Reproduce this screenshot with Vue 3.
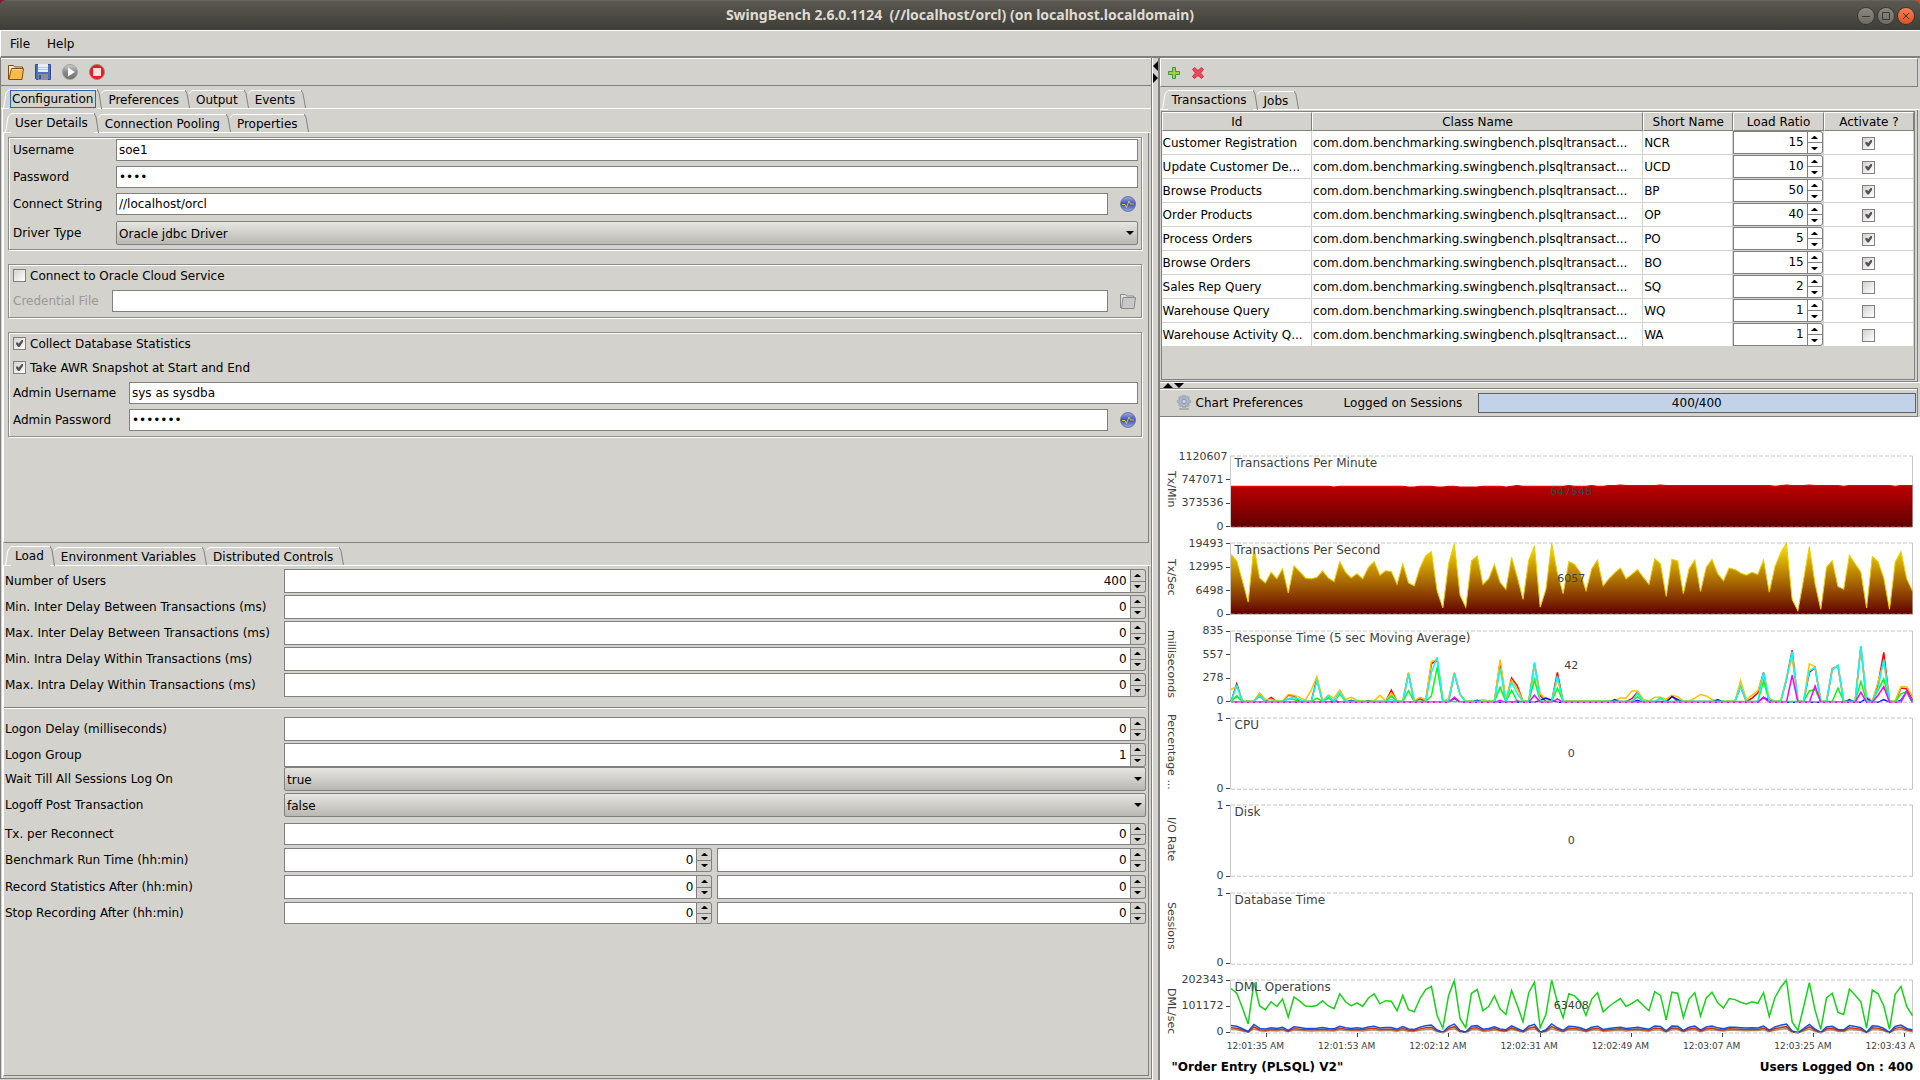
<script setup>
import { reactive, ref } from "vue";

const mainTabs = ["Configuration", "Preferences", "Output", "Events"];
const detailTabs = ["User Details", "Connection Pooling", "Properties"];
const loadTabs = ["Load", "Environment Variables", "Distributed Controls"];
const sideTabs = ["Transactions", "Jobs"];

const active = reactive({
  main: "Configuration",
  detail: "User Details",
  load: "Load",
  side: "Transactions",
});

const config = reactive({
  username: "soe1",
  password: "pass",
  connect: "//localhost/orcl",
  driver: "Oracle jdbc Driver",
  cloud: false,
  credential: "",
  collect: true,
  awr: true,
  adminUser: "sys as sysdba",
  adminPassword: "manager",
});

// each section is a block of rows in the Load tab
const sections = reactive([
  {
    name: "delays",
    rows: [
      { id: "users", label: "Number of Users", values: [400] },
      { id: "min-inter", label: "Min. Inter Delay Between Transactions (ms)", values: [0] },
      { id: "max-inter", label: "Max. Inter Delay Between Transactions (ms)", values: [0] },
      { id: "min-intra", label: "Min. Intra Delay Within Transactions (ms)", values: [0] },
      { id: "max-intra", label: "Max. Intra Delay Within Transactions (ms)", values: [0] },
    ],
  },
  {
    name: "logon",
    rows: [
      { id: "logon-delay", label: "Logon Delay (milliseconds)", values: [0] },
      { id: "logon-group", label: "Logon Group", values: [1] },
    ],
  },
  {
    name: "flags",
    rows: [
      { id: "wait", label: "Wait Till All Sessions Log On", choice: "true" },
      { id: "logoff", label: "Logoff Post Transaction", choice: "false" },
    ],
  },
  {
    name: "timing",
    rows: [
      { id: "reconnect", label: "Tx. per Reconnect", values: [0], short: true },
      { id: "runtime", label: "Benchmark Run Time (hh:min)", values: [0, 0] },
      { id: "record", label: "Record Statistics After (hh:min)", values: [0, 0] },
      { id: "stop", label: "Stop Recording After (hh:min)", values: [0, 0], short: true },
    ],
  },
]);

const className = "com.dom.benchmarking.swingbench.plsqltransact...";
const transactions = reactive([
  { id: "Customer Registration", short: "NCR", ratio: 15, on: true },
  { id: "Update Customer De...", short: "UCD", ratio: 10, on: true },
  { id: "Browse Products", short: "BP", ratio: 50, on: true },
  { id: "Order Products", short: "OP", ratio: 40, on: true },
  { id: "Process Orders", short: "PO", ratio: 5, on: true },
  { id: "Browse Orders", short: "BO", ratio: 15, on: true },
  { id: "Sales Rep Query", short: "SQ", ratio: 2, on: false },
  { id: "Warehouse Query", short: "WQ", ratio: 1, on: false },
  { id: "Warehouse Activity Q...", short: "WA", ratio: 1, on: false },
]);

const sessions = ref("400/400");

// samples are percentages of the chart maximum, one per tick of the clock
const SAMPLES = 120;

const tps = [
  84, 75, 47, 17, 95, 51, 44, 59, 50, 64, 30, 68, 60, 51, 50, 52, 61, 51, 46, 74,
  59, 51, 57, 50, 66, 74, 55, 61, 60, 42, 71, 44, 40, 65, 82, 88, 33, 9, 71, 99,
  27, 10, 75, 82, 42, 50, 70, 45, 35, 80, 52, 21, 76, 96, 10, 35, 100, 58, 29, 74,
  70, 59, 33, 64, 76, 40, 50, 58, 65, 50, 56, 63, 52, 42, 78, 71, 25, 77, 75, 29,
  64, 76, 32, 66, 77, 57, 47, 65, 63, 58, 55, 59, 56, 76, 31, 67, 86, 100, 21, 5,
  49, 95, 43, 7, 66, 75, 39, 35, 83, 71, 59, 9, 81, 74, 51, 7, 73, 88, 50, 33,
];

const tpmBumps = {
  18: -1, 31: -1, 32: -1, 36: -1, 37: -1, 40: -1, 41: -1, 42: -1, 43: -1, 48: -1, 50: 1,
  59: 1, 63: 1, 68: 1, 75: 1, 95: -1, 97: 1, 101: 1, 103: 0, 107: -1, 116: -1,
};
const tpm = Array.from({ length: SAMPLES }, (_, i) => (i < 66 ? 57.5 : 58.5) + (tpmBumps[i] || 0));

const spikes = (peaks, base) =>
  Array.from({ length: SAMPLES }, (_, i) => (i in peaks ? peaks[i] : base));

const responseSeries = [
  {
    color: "#ff0000",
    data: spikes({ 1: 26, 5: 12, 7: 7, 10: 10, 11: 9, 15: 33, 17: 9, 19: 14, 28: 17, 31: 41, 33: 5, 35: 54, 36: 60, 39: 41, 40: 11, 47: 56, 49: 34, 50: 23, 53: 54, 54: 9, 57: 42, 70: 5, 71: 14, 77: 9, 89: 22, 91: 6, 92: 13, 93: 42, 97: 32, 98: 73, 101: 42, 102: 49, 105: 47, 106: 51, 110: 78, 113: 25, 114: 70, 117: 20, 118: 19, 119: 3 }, 1),
  },
  {
    color: "#ffc000",
    data: spikes({ 0: 18, 1: 22, 5: 13, 6: 4, 7: 4, 10: 11, 11: 10, 12: 7, 13: 3, 14: 17, 15: 36, 16: 3, 17: 10, 18: 6, 19: 17, 20: 4, 21: 7, 22: 3, 26: 10, 28: 13, 31: 42, 33: 7, 34: 4, 35: 57, 36: 60, 38: 5, 39: 42, 40: 11, 44: 4, 47: 60, 48: 6, 49: 31, 50: 19, 53: 53, 54: 12, 55: 5, 57: 33, 68: 6, 69: 6, 70: 16, 71: 16, 72: 4, 74: 7, 75: 7, 76: 4, 77: 10, 78: 8, 81: 6, 82: 11, 83: 9, 84: 4, 89: 30, 90: 4, 91: 10, 92: 16, 93: 39, 94: 6, 97: 34, 98: 62, 101: 54, 102: 50, 105: 46, 106: 52, 110: 77, 111: 8, 113: 29, 114: 57, 117: 22, 118: 22, 119: 8 }, 2),
  },
  {
    color: "#1414ff",
    data: spikes({ 18: 3, 21: 3, 24: 2, 39: 6, 43: 3, 54: 3, 55: 6, 56: 3, 67: 4, 71: 3, 77: 8, 78: 4, 85: 4, 93: 7, 94: 3, 108: 4, 111: 6, 114: 4, 117: 3, 118: 15 }, 0),
  },
  {
    color: "#00ff00",
    data: spikes({ 1: 9, 5: 9, 10: 5, 11: 4, 15: 6, 17: 6, 19: 12, 28: 9, 31: 16, 35: 9, 36: 49, 47: 21, 49: 17, 53: 32, 57: 20, 71: 8, 75: 6, 93: 30, 101: 16, 102: 18, 106: 20, 110: 29, 113: 17, 114: 33, 117: 12, 118: 15 }, 1),
  },
  {
    color: "#00ffff",
    data: spikes({ 1: 23, 5: 10, 10: 5, 11: 7, 12: 4, 15: 30, 17: 9, 19: 14, 28: 4, 31: 39, 35: 42, 36: 63, 39: 41, 40: 11, 47: 47, 49: 28, 50: 12, 53: 56, 57: 37, 71: 13, 75: 5, 89: 22, 93: 42, 97: 32, 98: 71, 101: 44, 102: 49, 105: 45, 106: 52, 110: 79, 113: 20, 114: 60, 118: 14 }, 1),
  },
  {
    color: "#ff00ff",
    data: spikes({ 39: 7, 47: 3, 50: 2, 53: 10, 57: 5, 93: 7, 98: 38, 102: 23, 110: 14, 113: 10, 114: 22, 118: 16 }, 0),
  },
];

const dmlSeries = [
  { color: "#a89070", data: tps.map((v) => v * 0.08) },
  { color: "#d03000", data: tps.map((v) => v * 0.12) },
  { color: "#1050e0", data: tps.map((v) => v * 0.17) },
  { color: "#18d018", data: tps },
];

const charts = [
  { title: "Transactions Per Minute", axis: "Tx/Min", value: "647548", ticks: ["1120607", "747071", "373536", "0"], area: tpm, fill: "url(#fill-red)", edge: "#e00000" },
  { title: "Transactions Per Second", axis: "Tx/Sec", value: "6057", ticks: ["19493", "12995", "6498", "0"], area: tps, fill: "url(#fill-gold)", edge: "#e8d000" },
  { title: "Response Time (5 sec Moving Average)", axis: "milliseconds", value: "42", ticks: ["835", "557", "278", "0"], lines: responseSeries },
  { title: "CPU", axis: "Percentage ...", value: "0", ticks: ["1", "0"] },
  { title: "Disk", axis: "I/O Rate", value: "0", ticks: ["1", "0"] },
  { title: "Database Time", axis: "Sessions", value: "", ticks: ["1", "0"] },
  { title: "DML Operations", axis: "DML/sec", value: "63408", ticks: ["202343", "101172", "0"], lines: dmlSeries },
];

const times = [
  "12:01:35 AM", "12:01:53 AM", "12:02:12 AM", "12:02:31 AM",
  "12:02:49 AM", "12:03:07 AM", "12:03:25 AM", "12:03:43 A",
];

const toPoints = (data) => data.map((v, i) => `${i},${(100 - v).toFixed(1)}`).join(" ");
const toArea = (data) => `0,100 ${toPoints(data)} ${SAMPLES - 1},100`;

const step = (row, index, by) => {
  row.values[index] = Math.max(0, Number(row.values[index]) + by);
};
</script>

<template>
  <div class="window">
    <div class="titlebar-back">
      <header class="titlebar">
        <h1 class="title">SwingBench 2.6.0.1124&nbsp; (//localhost/orcl) (on localhost.localdomain)</h1>
        <div class="window-buttons">
          <button type="button" class="window-btn" aria-label="Minimize">
            <svg viewBox="0 0 16 16"><path d="M4 8.500h8" /></svg>
          </button>
          <button type="button" class="window-btn" aria-label="Maximize">
            <svg viewBox="0 0 16 16"><path d="M4.500 4.500h7v7h-7z" /></svg>
          </button>
          <button type="button" class="window-btn close" aria-label="Close">
            <svg viewBox="0 0 16 16"><path d="M5 5l6 6M11 5l-6 6" /></svg>
          </button>
        </div>
      </header>
    </div>

    <nav class="menubar">
      <button type="button" class="menu">File</button>
      <button type="button" class="menu">Help</button>
    </nav>

    <main class="panes">
      <section class="left-pane">
        <div class="toolbar">
          <button type="button" class="tool" aria-label="Open">
            <svg viewBox="0 0 16 16">
              <path d="M.5 15V1.500h5l1 1.500h8v3" fill="#fdf3dc" stroke="#8a4b08" />
              <path d="M.8 15.500L3.500 4.500h12l-1.500 11z" fill="#f7bb4a" stroke="#8a4b08" />
              <path d="M4.300 5.500h10" stroke="#fde0a0" />
            </svg>
          </button>
          <button type="button" class="tool" aria-label="Save">
            <svg viewBox="0 0 16 16">
              <path d="M.5.5h15v15h-14l-1-1z" fill="#4a6fc4" stroke="#35498c" />
              <path d="M3 0h10v8H3z" fill="#e8eef6" />
              <path d="M3 3.500h10M3 5.500h10" stroke="#b8c8dc" />
              <path d="M3 10h10v6H3z" fill="#8c8c8c" />
              <path d="M4 11h2v4H4z" fill="#2f55c0" />
            </svg>
          </button>
          <button type="button" class="tool" aria-label="Run">
            <svg viewBox="0 0 16 16">
              <circle cx="8" cy="8" r="7.500" fill="url(#disc-gray)" stroke="#a0a0a0" />
              <path d="M6 3.500v9L13 8z" fill="#fff" />
            </svg>
          </button>
          <button type="button" class="tool" aria-label="Stop">
            <svg viewBox="0 0 16 16">
              <circle cx="8" cy="8" r="7.500" fill="#f01818" stroke="#a08080" />
              <path d="M4 4h8v8H4z" fill="#ffe0e0" />
            </svg>
          </button>
        </div>

        <div class="tabs" role="tablist">
          <button v-for="tab in mainTabs" :key="tab" type="button" role="tab" class="tab" :class="{ active: tab === active.main }" @click="active.main = tab">
            <svg class="edge-left" viewBox="0 0 4 19" preserveAspectRatio="none"><path d="M0 4L3 .5H4" /></svg>
            <svg class="edge-foot" viewBox="0 0 8 20" preserveAspectRatio="none"><path d="M0 19.500H2.500L5 4L8 .5" /></svg>
            <span class="tab-label" :class="{ focused: tab === active.main }">{{ tab }}</span>
            <svg class="edge-right" viewBox="0 0 5 20" preserveAspectRatio="none"><path d="M0 0L2 4L4.500 20" /></svg>
          </button>
        </div>

        <div class="tab-panel">
          <div class="tabs inner" role="tablist">
            <button v-for="tab in detailTabs" :key="tab" type="button" role="tab" class="tab" :class="{ active: tab === active.detail }" @click="active.detail = tab">
              <svg class="edge-left" viewBox="0 0 4 19" preserveAspectRatio="none"><path d="M0 4L3 .5H4" /></svg>
              <svg class="edge-foot" viewBox="0 0 8 20" preserveAspectRatio="none"><path d="M0 19.500H2.500L5 4L8 .5" /></svg>
              <span class="tab-label">{{ tab }}</span>
              <svg class="edge-right" viewBox="0 0 5 20" preserveAspectRatio="none"><path d="M0 0L2 4L4.500 20" /></svg>
            </button>
          </div>

          <form class="details" @submit.prevent>
            <div class="group">
              <div class="row">
                <label class="row-label" for="username">Username</label>
                <input id="username" v-model="config.username" type="text" class="field" />
              </div>
              <div class="row">
                <label class="row-label" for="password">Password</label>
                <input id="password" v-model="config.password" type="password" class="field" />
              </div>
              <div class="row">
                <label class="row-label" for="connect">Connect String</label>
                <input id="connect" v-model="config.connect" type="text" class="field" />
                <button type="button" class="side-btn" aria-label="Test connection">
                  <svg viewBox="0 0 16 16">
                    <circle cx="8" cy="8" r="7.500" fill="url(#disc-blue)" stroke="#70789c" />
                    <path d="M2 8.500h3l1.500 3L9 5l1.500 3H14" fill="none" stroke="#e0c020" />
                  </svg>
                </button>
              </div>
              <div class="row driver">
                <label class="row-label" for="driver">Driver Type</label>
                <span class="combo">
                  <select id="driver" v-model="config.driver">
                    <option>Oracle jdbc Driver</option>
                  </select>
                  <svg class="combo-arrow" viewBox="0 0 8 4"><path d="M0 0h8L4 4z" /></svg>
                </span>
              </div>
            </div>

            <div class="group">
              <label class="check-row">
                <input v-model="config.cloud" type="checkbox" class="check" />
                Connect to Oracle Cloud Service
              </label>
              <div class="row">
                <label class="row-label credential" for="credential">Credential File</label>
                <input id="credential" v-model="config.credential" type="text" class="field" disabled />
                <button type="button" class="side-btn" aria-label="Browse" disabled>
                  <svg viewBox="0 0 16 16">
                    <path d="M.5 15V1.500h5l1 1.500h7v3" fill="#e4e4e4" stroke="#8a8a8a" />
                    <path d="M1.500 15.500L3 4.500h12.500l-1.500 11z" fill="#c8c8c8" stroke="#8a8a8a" />
                  </svg>
                </button>
              </div>
            </div>

            <div class="group">
              <label class="check-row">
                <input v-model="config.collect" type="checkbox" class="check" />
                Collect Database Statistics
              </label>
              <label class="check-row">
                <input v-model="config.awr" type="checkbox" class="check" />
                Take AWR Snapshot at Start and End
              </label>
              <div class="row">
                <label class="row-label admin" for="admin-user">Admin Username</label>
                <input id="admin-user" v-model="config.adminUser" type="text" class="field" />
              </div>
              <div class="row">
                <label class="row-label admin" for="admin-password">Admin Password</label>
                <input id="admin-password" v-model="config.adminPassword" type="password" class="field" />
                <button type="button" class="side-btn" aria-label="Test admin connection">
                  <svg viewBox="0 0 16 16">
                    <circle cx="8" cy="8" r="7.500" fill="url(#disc-blue)" stroke="#70789c" />
                    <path d="M2 8.500h3l1.500 3L9 5l1.500 3H14" fill="none" stroke="#e0c020" />
                  </svg>
                </button>
              </div>
            </div>
          </form>

          <div class="tabs" role="tablist">
            <button v-for="tab in loadTabs" :key="tab" type="button" role="tab" class="tab" :class="{ active: tab === active.load }" @click="active.load = tab">
              <svg class="edge-left" viewBox="0 0 4 19" preserveAspectRatio="none"><path d="M0 4L3 .5H4" /></svg>
              <svg class="edge-foot" viewBox="0 0 8 20" preserveAspectRatio="none"><path d="M0 19.500H2.500L5 4L8 .5" /></svg>
              <span class="tab-label">{{ tab }}</span>
              <svg class="edge-right" viewBox="0 0 5 20" preserveAspectRatio="none"><path d="M0 0L2 4L4.500 20" /></svg>
            </button>
          </div>

          <form class="load" @submit.prevent>
            <div v-for="section in sections" :key="section.name" class="section" :class="section.name">
              <div v-for="row in section.rows" :key="row.id" class="load-row" :class="{ short: row.short }">
                <label class="load-label" :for="row.id">{{ row.label }}</label>
                <span v-if="row.choice" class="combo">
                  <select :id="row.id" v-model="row.choice">
                    <option>true</option>
                    <option>false</option>
                  </select>
                  <svg class="combo-arrow" viewBox="0 0 8 4"><path d="M0 0h8L4 4z" /></svg>
                </span>
                <template v-else>
                  <span v-for="(value, i) in row.values" :key="i" class="spinner">
                    <input :id="i ? row.id + '-min' : row.id" v-model="row.values[i]" type="text" :aria-label="row.label" />
                    <span class="spin-buttons">
                      <button type="button" aria-label="Increase" @click="step(row, i, 1)">
                        <svg viewBox="0 0 7 3"><path d="M0 3h7L4 0H3z" /></svg>
                      </button>
                      <button type="button" aria-label="Decrease" @click="step(row, i, -1)">
                        <svg viewBox="0 0 7 3"><path d="M0 0h7L4 3H3z" /></svg>
                      </button>
                    </span>
                  </span>
                </template>
              </div>
            </div>
          </form>
        </div>
      </section>

      <div class="split-v">
        <svg viewBox="0 0 6 22"><path d="M5 0v10L0 5zM0 12v10l5-5z" /></svg>
      </div>

      <section class="right-pane">
        <div class="toolbar side">
          <button type="button" class="tool small" aria-label="Add">
            <svg viewBox="0 0 12 12"><path d="M4.500.5h3v4h4v3h-4v4h-3v-4h-4v-3h4z" fill="#a8cc48" stroke="#3c9448" /></svg>
          </button>
          <button type="button" class="tool small" aria-label="Delete">
            <svg viewBox="0 0 12 12"><path d="M2.500.5L6 3.500 9.500.5l2 2L8.500 6l3 3.500-2 2L6 8.500l-3.500 3-2-2L3.500 6l-3-3.500z" fill="#f04858" stroke="#c83040" /></svg>
          </button>
        </div>

        <div class="tabs" role="tablist">
          <button v-for="tab in sideTabs" :key="tab" type="button" role="tab" class="tab" :class="{ active: tab === active.side }" @click="active.side = tab">
            <svg class="edge-left" viewBox="0 0 4 19" preserveAspectRatio="none"><path d="M0 4L3 .5H4" /></svg>
            <svg class="edge-foot" viewBox="0 0 8 20" preserveAspectRatio="none"><path d="M0 19.500H2.500L5 4L8 .5" /></svg>
            <span class="tab-label">{{ tab }}</span>
            <svg class="edge-right" viewBox="0 0 5 20" preserveAspectRatio="none"><path d="M0 0L2 4L4.500 20" /></svg>
          </button>
        </div>

        <div class="table-panel">
          <div class="table-scroll">
            <table class="transactions">
              <colgroup>
                <col class="col-id" />
                <col class="col-class" />
                <col class="col-narrow" />
                <col class="col-narrow" />
                <col class="col-narrow" />
              </colgroup>
              <thead>
                <tr>
                  <th>Id</th>
                  <th>Class Name</th>
                  <th>Short Name</th>
                  <th>Load Ratio</th>
                  <th>Activate ?</th>
                </tr>
              </thead>
              <tbody>
                <tr v-for="tx in transactions" :key="tx.short">
                  <td>{{ tx.id }}</td>
                  <td>{{ className }}</td>
                  <td>{{ tx.short }}</td>
                  <td class="cell-spin">
                    <span class="spinner">
                      <input v-model="tx.ratio" type="text" :aria-label="tx.id + ' load ratio'" />
                      <span class="spin-buttons">
                        <button type="button" aria-label="Increase" @click="tx.ratio++">
                          <svg viewBox="0 0 7 3"><path d="M0 3h7L4 0H3z" /></svg>
                        </button>
                        <button type="button" aria-label="Decrease" @click="tx.ratio--">
                          <svg viewBox="0 0 7 3"><path d="M0 0h7L4 3H3z" /></svg>
                        </button>
                      </span>
                    </span>
                  </td>
                  <td class="cell-check">
                    <input v-model="tx.on" type="checkbox" class="check" :aria-label="'Activate ' + tx.id" />
                  </td>
                </tr>
              </tbody>
            </table>
          </div>
        </div>

        <div class="split-h">
          <svg viewBox="0 0 22 5"><path d="M0 5h10L5 0zM11 0h10l-5 5z" /></svg>
        </div>

        <div class="chart-bar">
          <button type="button" class="chart-prefs">
            <svg viewBox="0 0 16 16">
              <path d="M6.800 0h2.400l.5 2.200 1.900-1.200 1.800 1.700-1.200 2 2.300.6v2.500l-2.300.5 1.200 2-1.700 1.700-2-1.100-.5 2.300H6.800l-.5-2.300-2 1.100-1.700-1.700 1.100-2-2.300-.5V5.300l2.300-.6-1.100-2L4.300 1l2 1.200z" fill="#a8b4c8" stroke="#8490a8" stroke-width=".5" />
              <circle cx="8" cy="6.500" r="2.200" fill="#d4d2cc" stroke="#8898b8" />
              <path d="M3 14h10" stroke="#b0aea8" stroke-width="2" />
            </svg>
            Chart Preferences
          </button>
          <span class="sessions-label">Logged on Sessions</span>
          <div class="progress" role="progressbar" aria-valuenow="400" aria-valuemax="400">{{ sessions }}</div>
        </div>

        <div class="charts">
          <div class="chart-rows">
            <div v-for="chart in charts" :key="chart.title" class="chart">
              <span class="axis-title">{{ chart.axis }}</span>
              <div class="ticks">
                <span v-for="tick in chart.ticks" :key="tick" class="tick">{{ tick }}</span>
              </div>
              <div class="plot">
                <svg viewBox="0 0 119 100" preserveAspectRatio="none">
                  <template v-if="chart.area">
                    <polygon :points="toArea(chart.area)" :fill="chart.fill" />
                    <polyline :points="toPoints(chart.area)" :stroke="chart.edge" class="line thin" />
                  </template>
                  <polyline v-for="line in chart.lines" :key="line.color" :points="toPoints(line.data)" :stroke="line.color" class="line" />
                  <path class="guide" d="M0 0H119M0 100H119" />
                </svg>
                <span class="chart-title">{{ chart.title }}</span>
                <span class="chart-value">{{ chart.value }}</span>
              </div>
            </div>
          </div>

          <div class="time-axis">
            <span v-for="(time, i) in times" :key="time" class="time" :style="{ left: 5.3 + i * 13.35 + '%' }">{{ time }}</span>
          </div>

          <footer class="chart-footer">
            <span>"Order Entry (PLSQL) V2"</span>
            <span>Users Logged On : 400</span>
          </footer>
        </div>
      </section>
    </main>

    <svg class="defs" aria-hidden="true">
      <defs>
        <linearGradient id="fill-red" gradientUnits="userSpaceOnUse" x1="0" y1="0" x2="0" y2="100">
          <stop offset="0" stop-color="#ff0000" />
          <stop offset="1" stop-color="#600000" />
        </linearGradient>
        <linearGradient id="fill-gold" gradientUnits="userSpaceOnUse" x1="0" y1="0" x2="0" y2="100">
          <stop offset="0" stop-color="#ffe600" />
          <stop offset="1" stop-color="#600000" />
        </linearGradient>
        <linearGradient id="disc-gray" x1="0" y1="0" x2="0" y2="1">
          <stop offset="0" stop-color="#d0d0d0" />
          <stop offset=".5" stop-color="#888" />
          <stop offset="1" stop-color="#707070" />
        </linearGradient>
        <linearGradient id="disc-blue" x1="0" y1="0" x2="0" y2="1">
          <stop offset="0" stop-color="#a0acdc" />
          <stop offset=".5" stop-color="#3c50c0" />
          <stop offset="1" stop-color="#98a8e0" />
        </linearGradient>
      </defs>
    </svg>
  </div>
</template>

<style>
body {
  margin: 0;
  background: #d4d2cc;
}
</style>

<style scoped>
* {
  box-sizing: border-box;
}

.window {
  display: flex;
  flex-direction: column;
  min-height: 100vh;
  background: #d4d2cc;
  color: #000;
  font-family: "DejaVu Sans", sans-serif;
  font-size: 12px;
  line-height: 16px;
}

button,
input,
select {
  margin: 0;
  padding: 0;
  border: 0;
  border-radius: 0;
  background: none;
  color: inherit;
  font: inherit;
}

svg {
  display: block;
}

.defs {
  position: absolute;
  width: 0;
  height: 0;
}

/* Title bar */
.titlebar-back {
  background: linear-gradient(to right, #8a1538, #d84a1a);
}

.titlebar {
  display: grid;
  grid-template-columns: 1fr auto 1fr;
  align-items: center;
  height: 30px;
  padding: 0 6px;
  border-top: 1px solid #66635a;
  border-radius: 6px 6px 0 0;
  background: linear-gradient(#5b5850, #3e3d37);
}

.title {
  grid-column: 2;
  margin: 0;
  padding-bottom: 2px;
  color: #dfdbd2;
  font-family: "Noto Sans", sans-serif;
  font-size: 14px;
  font-weight: 700;
  line-height: 20px;
}

.window-buttons {
  display: flex;
  justify-content: flex-end;
  gap: 4px;
}

.window-btn {
  width: 16px;
  height: 16px;
  border-radius: 50%;
  background: linear-gradient(#8c897f, #6c6a62);
  box-shadow: 0 0 0 1px #36352f;
}

.window-btn path {
  fill: none;
  stroke: #3a3933;
}

.window-btn.close {
  background: linear-gradient(#f68058, #e2501c);
}

/* Menu */
.menubar {
  display: flex;
  gap: 17px;
  height: 28px;
  padding: 0 9px;
  border-top: 1px solid #fff;
  border-left: 1px solid #fff;
  border-bottom: 2px solid #808080;
}

/* Panes */
.panes {
  display: flex;
  flex: 1;
}

.left-pane {
  display: flex;
  flex-direction: column;
  flex: 1152 1 0;
  min-width: 0;
  margin-bottom: 1px;
  border-left: 1px solid #808080;
  border-right: 1px solid #808080;
  border-bottom: 1px solid #808080;
}

.right-pane {
  display: flex;
  flex-direction: column;
  flex: 762 1 0;
  min-width: 0;
  border-left: 2px solid #808080;
}

.toolbar {
  display: flex;
  align-items: center;
  gap: 11px;
  height: 28px;
  padding: 0 7px;
  border-top: 1px solid #fff;
  border-bottom: 1px solid #808080;
}

.toolbar.side {
  gap: 12px;
  height: 29px;
  margin-right: 2px;
  border-left: 1px solid #fff;
  border-right: 1px solid #808080;
}

.tool {
  width: 16px;
  height: 16px;
}

.tool.small {
  width: 12px;
  height: 12px;
}

/* Tabs */
.tabs {
  display: flex;
  align-items: flex-end;
  height: 23px;
  border-bottom: 1px solid #fff;
}

.tabs.inner {
  height: 24px;
}

.tab {
  display: flex;
  align-items: stretch;
  height: 18px;
  margin-left: -1px;
  line-height: 18px;
}

.tab.active {
  position: relative;
  z-index: 1;
  height: 20px;
  margin: 0 0 -1px;
}

.tab svg {
  flex: none;
  height: 100%;
  fill: none;
  stroke: #fff;
}

.edge-left {
  width: 4px;
}

.edge-foot {
  display: none;
  width: 8px;
}

.active .edge-left {
  display: none;
}

.active .edge-foot {
  display: block;
}

.tab .edge-right {
  width: 5px;
  stroke: #808080;
}

.tab-label {
  padding: 0 6px 0 3px;
  border-top: 1px solid #fff;
}

.active .tab-label {
  padding-left: 4px;
  background: #d4d2cc;
}

.active .tab-label.focused {
  padding: 0 4px 0 3px;
  outline: 1px solid #2a62c4;
  outline-offset: -2px;
}

.tab-panel {
  display: flex;
  flex-direction: column;
  flex: 1;
  margin: 0 0 0 1px;
  border-left: 1px solid #fff;
}

/* User details */
.details {
  display: flex;
  flex-direction: column;
  gap: 14px;
  min-height: 410px;
  margin-right: 2px;
  padding: 4px 6px 4px 4px;
  border-left: 1px solid #fff;
  border-right: 1px solid #808080;
  border-bottom: 1px solid #808080;
}

.group {
  display: flex;
  flex-direction: column;
  gap: 5px;
  padding: 1px 3px 5px 4px;
  border: 1px solid #8c8c88;
  box-shadow: 1px 1px 0 #fff, inset 1px 1px 0 #fff;
}

.row {
  display: flex;
  align-items: center;
}

.row.driver {
  margin: 1px 0 -1px;
}

.row-label {
  flex: none;
  width: 103px;
}

.row-label.admin {
  width: 116px;
}

.row-label.credential {
  width: 99px;
  color: #9a9993;
}

.field {
  flex: 1;
  min-width: 0;
  height: 22px;
  padding: 0 2px;
  border: 1px solid #808080;
  background: #fff;
}

.side-btn {
  flex: none;
  width: 30px;
  padding: 0 2px 0 12px;
}

.check-row {
  display: flex;
  align-items: center;
  gap: 4px;
  height: 19px;
}

.check {
  flex: none;
  width: 13px;
  height: 13px;
  border: 1px solid #808080;
  background: linear-gradient(135deg, #d4d2cc, #fff);
  appearance: none;
}

.check:checked::before {
  display: block;
  width: 7px;
  height: 7px;
  margin: 2px;
  background: #555;
  clip-path: polygon(0 35%, 30% 35%, 38% 55%, 80% 0, 100% 0, 100% 30%, 50% 100%, 30% 100%, 0 60%);
  content: "";
}

.combo {
  position: relative;
  display: flex;
  flex: 1;
  height: 24px;
}

.combo select {
  flex: 1;
  padding: 1px 2px 0;
  border: 1px solid #808080;
  border-radius: 2px;
  background: linear-gradient(#e6e6e2, #d0cfc9 50%, #b8b8b1);
  appearance: none;
}

.combo-arrow {
  position: absolute;
  top: 10px;
  right: 4px;
  width: 8px;
  height: 4px;
  pointer-events: none;
}

/* Load */
.load {
  flex: 1;
  margin: 0 2px 2px 0;
  padding: 3px 2px 3px 0;
  border-left: 1px solid #fff;
  border-right: 1px solid #808080;
  border-bottom: 1px solid #808080;
}

.section {
  display: flex;
  flex-direction: column;
  gap: 2px;
  padding-left: 1px;
}

.section.logon {
  margin-top: 10px;
  padding-top: 9px;
  border-top: 1px solid #808080;
  box-shadow: inset 0 1px 0 #fff;
}

.section.timing {
  gap: 3px;
  margin-top: 6px;
}

.load-row {
  display: flex;
  align-items: center;
  height: 24px;
}

.load-row.short {
  height: 22px;
}

.load-label {
  flex: none;
  width: 279px;
  white-space: nowrap;
}

.spinner {
  display: flex;
  flex: 1;
  align-self: stretch;
}

.spinner + .spinner {
  margin-left: 5px;
}

.spinner input {
  flex: 1;
  width: 0;
  min-width: 0;
  padding: 0 3px;
  border: 1px solid #808080;
  background: #fff;
  text-align: right;
}

.spin-buttons {
  display: flex;
  flex: none;
  flex-direction: column;
  width: 15px;
  border: 1px solid #808080;
  border-left: 0;
  border-radius: 0 3px 3px 0;
}

.spin-buttons button {
  display: flex;
  align-items: center;
  justify-content: center;
  flex: 1;
}

.spin-buttons button + button {
  border-top: 1px solid #808080;
}

.spin-buttons svg {
  width: 7px;
  height: 3px;
}

/* Dividers */
.split-v {
  width: 6px;
  padding-top: 3px;
  border-left: 1px solid #fff;
}

.split-v svg {
  width: 6px;
  height: 22px;
}

.split-h {
  height: 6px;
  padding-left: 3px;
  border-top: 1px solid #fff;
}

.split-h svg {
  width: 22px;
  height: 5px;
}

/* Transactions */
.table-panel {
  margin-right: 2px;
  padding: 1px 2px 1px 1px;
  border-right: 1px solid #808080;
  border-bottom: 1px solid #808080;
}

.table-scroll {
  min-height: 269px;
  border: 1px solid #808080;
}

.transactions {
  width: 100%;
  border-collapse: separate;
  border-spacing: 0;
  table-layout: fixed;
}

.col-id {
  width: 20%;
}

.col-class {
  width: 44%;
}

.col-narrow {
  width: 12%;
}

th {
  height: 19px;
  padding: 0;
  border-top: 1px solid #fff;
  border-left: 1px solid #fff;
  border-right: 1px solid #808080;
  border-bottom: 1px solid #808080;
  font-weight: 400;
}

td {
  height: 24px;
  padding: 0 0 0 1px;
  overflow: hidden;
  border-right: 1px solid #d4d2cc;
  border-bottom: 1px solid #d4d2cc;
  background: #fff;
  white-space: nowrap;
}

.cell-spin {
  padding: 0;
}

.cell-spin .spinner {
  height: 23px;
}

.cell-spin input {
  padding-bottom: 2px;
}

.cell-check {
  text-align: center;
}

.cell-check .check {
  vertical-align: middle;
}

/* Charts */
.chart-bar {
  display: flex;
  align-items: center;
  height: 29px;
  margin-right: 2px;
  padding: 1px 1px 0 16px;
  border-top: 1px solid #808080;
  border-right: 1px solid #808080;
  border-bottom: 1px solid #808080;
  box-shadow: inset 0 1px 0 #fff;
}

.chart-prefs {
  display: flex;
  align-items: center;
  gap: 4px;
  width: 168px;
}

.chart-prefs svg {
  width: 16px;
  height: 16px;
}

.sessions-label {
  width: 134px;
}

.progress {
  flex: 1;
  height: 20px;
  border: 1px solid #606060;
  background: #c2d2e9;
  line-height: 18px;
  text-align: center;
}

.charts {
  display: flex;
  flex-direction: column;
  flex: 1;
  padding: 39px 7px 0 0;
  background: #fff;
  color: #404040;
}

.chart-rows {
  display: flex;
  flex-direction: column;
  flex: 1;
  gap: 16px;
}

.chart {
  display: grid;
  grid-template-rows: minmax(0, 1fr);
  grid-template-columns: 22px 48px 1fr;
  flex: 1 0 0;
  min-height: 40px;
}

.chart:last-child {
  flex: none;
  height: 53px;
}

.axis-title {
  align-self: center;
  justify-self: center;
  height: 78px;
  margin: -12px 0 -8px;
  font-size: 11px;
  line-height: 14px;
  text-align: center;
  white-space: nowrap;
  writing-mode: vertical-rl;
}

.chart:last-child .axis-title {
  align-self: start;
  margin: -8px 0 0;
}

.ticks {
  display: flex;
  flex-direction: column;
  justify-content: space-between;
  font-size: 11px;
}

.tick {
  display: flex;
  align-items: center;
  justify-content: flex-end;
  gap: 2px;
  height: 1px;
}

.tick::after {
  width: 4px;
  height: 1px;
  background: #404040;
  content: "";
}

.plot {
  position: relative;
  min-width: 0;
  border-left: 1px solid #c8c8c8;
  border-right: 1px solid #c8c8c8;
}

.plot > svg {
  position: absolute;
  inset: 0;
  width: 100%;
  height: 100%;
  overflow: visible;
}

.line {
  fill: none;
  stroke-width: 1.5px;
  vector-effect: non-scaling-stroke;
}

.line.thin {
  stroke-width: 1px;
}

.guide {
  fill: none;
  stroke: #c4c4c4;
  stroke-dasharray: 4 2;
  vector-effect: non-scaling-stroke;
}

.chart-title {
  position: absolute;
  top: -1px;
  left: 4px;
}

.chart-value {
  position: absolute;
  inset: 0;
  display: flex;
  align-items: center;
  justify-content: center;
  font-size: 11px;
}

.time-axis {
  position: relative;
  height: 20px;
  margin-left: 70px;
}

.time {
  position: absolute;
  top: 0;
  margin-left: -39px;
  font-size: 9px;
  line-height: 18px;
  white-space: nowrap;
}

.time::before {
  display: block;
  width: 1px;
  height: 4px;
  margin-left: 39px;
  background: #404040;
  content: "";
}

.chart-footer {
  display: flex;
  justify-content: space-between;
  height: 27px;
  padding: 6px 0 0 12px;
  color: #000;
  font-weight: 700;
}
</style>
